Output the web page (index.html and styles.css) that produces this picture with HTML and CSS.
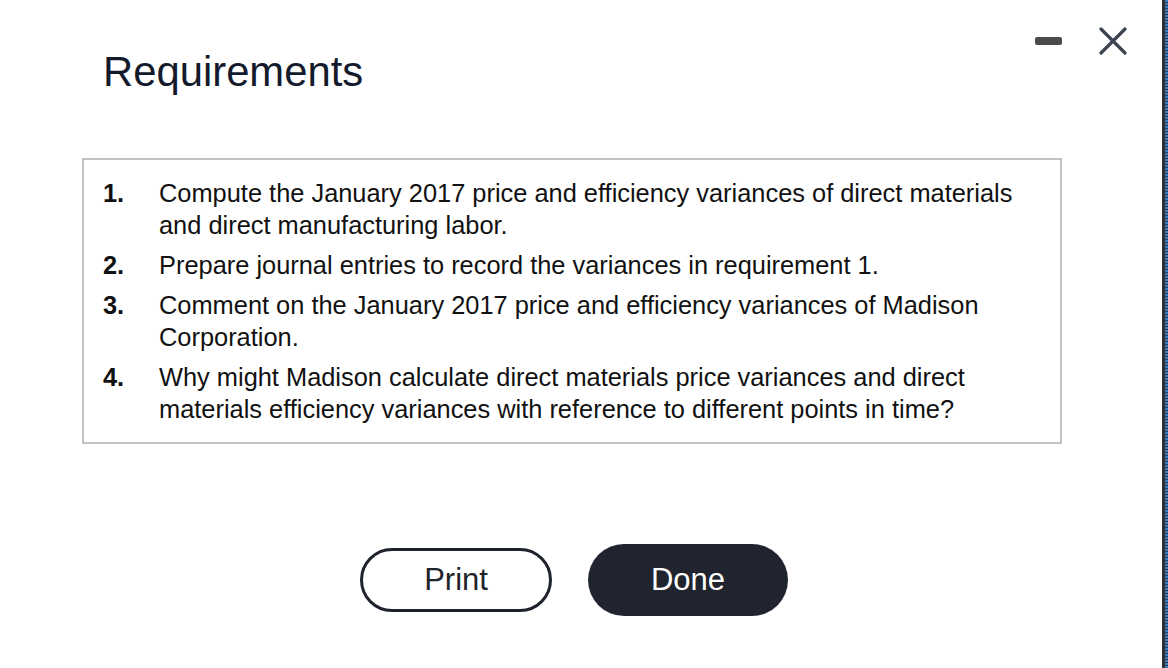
FILE: index.html
```html
<!DOCTYPE html>
<html>
<head>
<meta charset="utf-8">
<link rel="stylesheet" href="styles.css">
</head>
<body>
<div class="window">
  <div class="dialog">
    <div class="controls">
      <button class="ctl min" aria-label="Minimize"><span class="min-bar"></span></button>
      <button class="ctl close" aria-label="Close">
        <svg width="28" height="28" viewBox="0 0 28 28"><path d="M2 2 L26 26 M26 2 L2 26" stroke="#3c4450" stroke-width="3.2" stroke-linecap="round" fill="none"/></svg>
      </button>
    </div>
    <h1 class="title">Requirements</h1>
    <div class="box">
      <ol class="reqs">
        <li><span class="num">1.</span><span class="txt">Compute the January 2017 price and efficiency variances of direct materials and direct manufacturing labor.</span></li>
        <li><span class="num">2.</span><span class="txt">Prepare journal entries to record the variances in requirement 1.</span></li>
        <li><span class="num">3.</span><span class="txt">Comment on the January 2017 price and efficiency variances of Madison Corporation.</span></li>
        <li><span class="num">4.</span><span class="txt">Why might Madison calculate direct materials price variances and direct materials efficiency variances with reference to different points in time?</span></li>
      </ol>
    </div>
    <div class="actions">
      <button class="btn print">Print</button>
      <button class="btn done">Done</button>
    </div>
  </div>
  <div class="edge"><div class="edge-dark"></div><div class="edge-blue"></div></div>
</div>
</body>
</html>
```

FILE: styles.css
```css
html, body {
  margin: 0;
  padding: 0;
  background: #ffffff;
}
body {
  font-family: "Liberation Sans", Arial, Helvetica, sans-serif;
  width: 1168px;
  height: 668px;
  overflow: hidden;
}
.window {
  display: flex;
  height: 668px;
}
.dialog {
  flex: 1;
  position: relative;
  padding: 0 0 0 82px;
  background: #fff;
}
.controls {
  position: absolute;
  top: 27px;
  right: 35px;
  display: flex;
  align-items: center;
  gap: 37px;
}
.ctl {
  border: 0;
  background: transparent;
  padding: 0;
  margin: 0;
  display: flex;
  align-items: center;
  justify-content: center;
}
.min-bar {
  display: block;
  width: 27px;
  height: 8px;
  border-radius: 2px;
  background: #4b4b4d;
}
.close svg { display: block; }
.title {
  margin: 0;
  padding: 50px 0 0 21px;
  font-size: 41.8px;
  line-height: 44px;
  font-weight: 400;
  color: #131a2c;
}
.box {
  margin-top: 64px;
  width: 980px;
  height: 286px;
  border: 2px solid #c3c3c3;
  box-sizing: border-box;
  padding: 17px 0 0 19px;
}
.reqs {
  list-style: none;
  margin: 0;
  padding: 0;
  font-size: 25.4px;
  line-height: 32px;
  color: #111;
}
.reqs li {
  display: flex;
  margin-bottom: 8px;
}
.num {
  width: 56px;
  flex: none;
  font-weight: 700;
}
.txt {
  width: 880px;
}
.actions {
  display: flex;
  align-items: center;
  gap: 36px;
  margin-top: 100px;
  padding-left: 278px;
}
.btn {
  font-family: "Liberation Sans", Arial, Helvetica, sans-serif;
  font-size: 31px;
  border-radius: 40px;
  box-sizing: border-box;
  cursor: pointer;
}
.print {
  width: 192px;
  height: 64px;
  background: #fff;
  color: #1f232c;
  border: 3px solid #1f232c;
}
.done {
  width: 200px;
  height: 72px;
  background: #20242e;
  color: #fff;
  border: 0;
}
.edge {
  display: flex;
  width: 6px;
  flex: none;
}
.edge-dark {
  width: 3px;
  background: #2e2f33;
}
.edge-blue {
  width: 3px;
  background: repeating-linear-gradient(to bottom, #3a7fc0 0 2px, #2a3a4c 2px 3px);
}
```
